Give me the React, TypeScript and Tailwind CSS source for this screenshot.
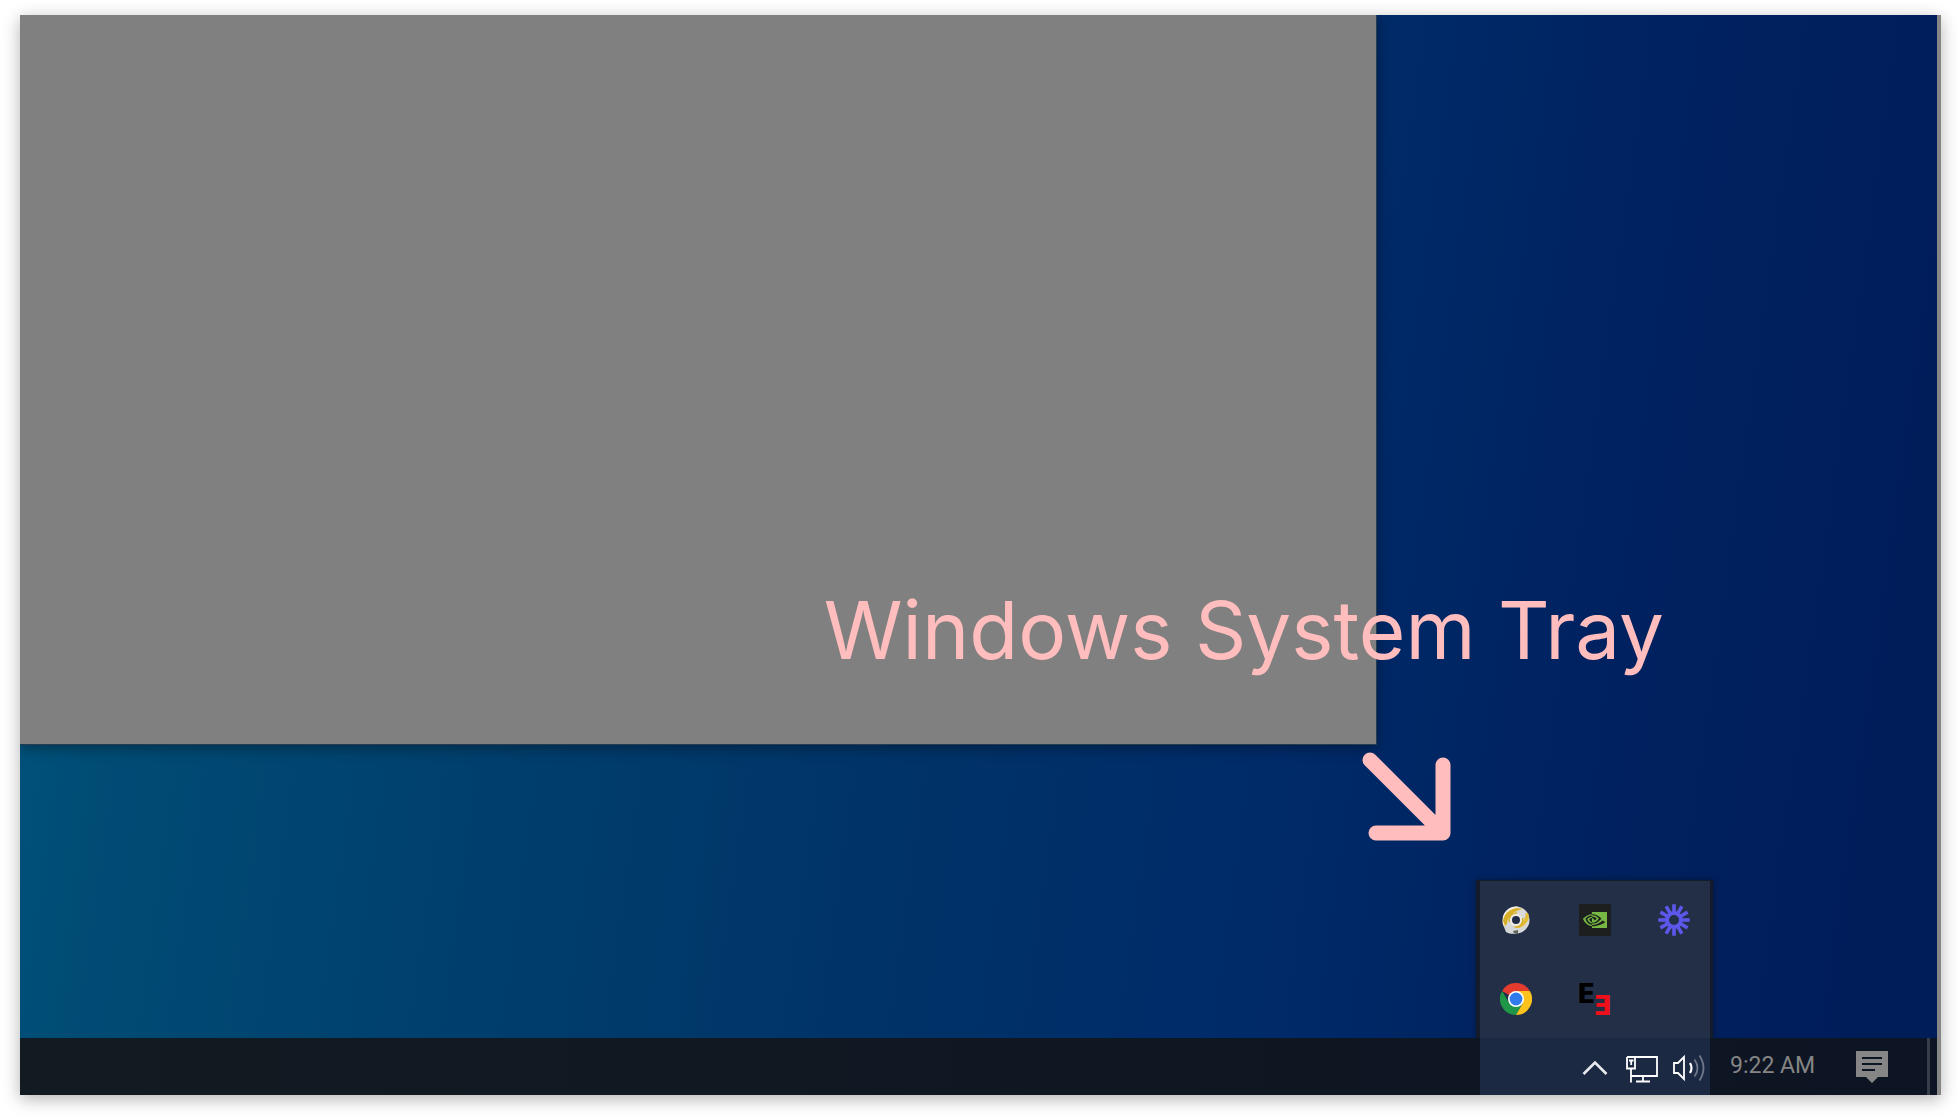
import React from 'react';
import { SiNvidia } from 'react-icons/si';

const DiscIcon = () => (
  <svg viewBox="0 0 32 32" className="w-8 h-8">
    <circle cx="16" cy="16" r="13.5" fill="#d9d9d9" />
    <path d="M3 14A13.5 13.5 0 0 1 18 2.7L14 9A7 7 0 0 0 8 16L4 23A13 13 0 0 1 3 14Z" fill="#f4f1e4" />
    <path d="M3 17C4 10 9 5 17 4L23 5C14 7 8 11 7 20L5 22Z" fill="#d9b128" />
    <path d="M29 13C28 19 23 24 15 25L12 23C20 22 25 17 26 9L28 9Z" fill="#e2bd38" />
    <path d="M4 23C8 21 13 24 20 24L22 27C18 30 10 31 6 28Z" fill="#d6d7d9" />
    <path d="M13 27L18 26L18 30L14 29Z" fill="#5e665a" />
    <circle cx="16" cy="16" r="6.5" fill="#eceae2" />
    <path d="M9.5 18A7 7 0 0 1 17 9M22.5 14A7 7 0 0 1 15 23" fill="none" stroke="#d9b128" strokeWidth="1.4" />
    <circle cx="16" cy="16" r="4" fill="#202c45" />
  </svg>
);

const NvidiaIcon = () => (
  <span className="flex w-8 h-8 items-center justify-center bg-[#1d1f1e]">
    <SiNvidia className="w-6 h-6 text-[#76b843]" />
  </span>
);

const rays = [0, 30, 60, 90, 120, 150, 180, 210, 240, 270, 300, 330];

const BurstIcon = () => (
  <svg viewBox="0 0 32 32" className="w-8 h-8" stroke="#5c57ea" fill="none">
    <circle cx="16" cy="16" r="7" strokeWidth="4" />
    {rays.map((angle) => (
      <path key={angle} d="M16 9V0.3" strokeWidth="3.6" transform={`rotate(${angle} 16 16)`} />
    ))}
  </svg>
);

const ChromeIcon = () => (
  <svg viewBox="0 0 32 32" className="w-8 h-8">
    <path d="M16 16L2.14 8A16 16 0 0 1 29.86 8Z" fill="#e33b2e" />
    <path d="M9.1 20L2.14 8A16 16 0 0 0 16 32L22.9 20Z" fill="#1f9648" />
    <path d="M16 8H29.86A16 16 0 0 1 16 32L22.9 20Z" fill="#fcc31e" />
    <circle cx="16" cy="16" r="8" fill="#fff" />
    <circle cx="16" cy="16" r="6.4" fill="#2f7bec" />
  </svg>
);

const E3Icon = () => (
  <svg viewBox="0 0 32 32" className="w-8 h-8 overflow-visible font-['DejaVu_Sans'] font-bold">
    <text x="-2" y="20" fontSize="27" fill="#000">E</text>
    <text x="14" y="32" fontSize="27" fill="#f0101c">Ǝ</text>
  </svg>
);

const ChevronIcon = () => (
  <svg viewBox="0 0 32 32" className="w-8 h-8" fill="none" stroke="#e8eaee" strokeWidth="2.6">
    <path d="M4.5 23L16 11.5L27.5 23" />
  </svg>
);

const NetworkIcon = () => (
  <svg viewBox="0 0 32 32" className="w-8 h-8" fill="none" stroke="#fff" strokeWidth="1.8">
    <path d="M1 6H31V25H5M17 25V30M10 30.5H24" />
    <path d="M1 6V17.5H9V6M5 17.5V31.5" />
    <path d="M3 9.5H7.5M5.2 10V14" />
  </svg>
);

const VolumeIcon = () => (
  <svg viewBox="0 0 32 32" className="w-8 h-8" fill="none" stroke="#fff" strokeWidth="1.8">
    <path d="M1 12V22H5L11 28V6L5 12Z" />
    <path d="M17 12Q20 17 17 22" strokeWidth="2.2" />
    <path d="M21.5 8.5Q27.5 17 21.5 25.5" stroke="#6f788a" />
    <path d="M26.5 4.5Q34.5 17 26.5 29.5" stroke="#6f788a" />
  </svg>
);

const NotificationIcon = () => (
  <svg viewBox="0 0 32 32" className="w-8 h-8">
    <path d="M0 0H32V26H22L16 32L10 26H0Z" fill="#868686" />
    <path d="M6 7H26M6 13H26M6 19H19" stroke="#0e1522" strokeWidth="1.8" />
  </svg>
);

const trayApps = [
  { name: 'Disc', Icon: DiscIcon },
  { name: 'NVIDIA', Icon: NvidiaIcon },
  { name: 'Loom', Icon: BurstIcon },
  { name: 'Chrome', Icon: ChromeIcon },
  { name: 'E3', Icon: E3Icon },
];

const TrayPopup = () => (
  <div className="absolute bottom-0 right-[224px] w-[237px] bg-[#232f47] shadow-[0_0_6px_rgba(0,0,0,0.4),inset_4px_0_0_#141b2b,inset_-3px_0_0_#141b2b,inset_0_1px_0_#141b2b]">
    <div className="grid grid-cols-3">
      {trayApps.map(({ name, Icon }) => (
        <button key={name} aria-label={name} className="flex h-[79px] items-center justify-center">
          <Icon />
        </button>
      ))}
    </div>
  </div>
);

const Taskbar = () => (
  <div className="flex h-[57px] shrink-0 justify-end bg-linear-to-r from-[#121b21] to-[#0d1423]">
    <div className="flex w-[230px] items-center justify-end gap-[15px] bg-[#1c2943] pr-[5px]">
      <button aria-label="Show hidden icons"><ChevronIcon /></button>
      <button aria-label="Network"><NetworkIcon /></button>
      <button aria-label="Volume"><VolumeIcon /></button>
    </div>
    <button className="w-[146px] pl-5 text-left font-['Roboto',sans-serif] text-[23px] text-[#858585] whitespace-nowrap">
      9:22 AM
    </button>
    <button aria-label="Notifications" className="mr-[39px]"><NotificationIcon /></button>
    <div className="mr-[7px] w-[3px] bg-[#383e49]"></div>
  </div>
);

const Callout = () => (
  <>
    <p className="absolute bottom-[358px] right-[273px] font-['Inter',sans-serif] text-[80px] leading-[100px] whitespace-nowrap text-[#ffbdbd]">
      Windows System Tray
    </p>
    <svg
      viewBox="0 0 90 90"
      className="absolute bottom-[196px] right-[485px] w-[90px] h-[90px]"
      fill="none"
      stroke="#ffbdbd"
      strokeWidth="15"
      strokeLinecap="round"
      strokeLinejoin="round"
    >
      <path d="M8 8L81 81M81 13V81H14" />
    </svg>
  </>
);

const App: React.FC = () => {
  return (
    <div className="h-screen bg-white pt-[15px] pr-[17px] pb-[23px] pl-5">
      <div className="flex h-full flex-col border-r-4 border-[#868686] shadow-[0_4px_16px_rgba(0,0,0,0.3)]">
        <div className="relative flex-1 overflow-hidden bg-[linear-gradient(98deg,#00527b_4%,#004c75_9%,#003d6c_31%,#003268_50%,#002b69_66%,#002260_80%,#001d5a_96%)]">
          <div className="absolute top-0 left-0 right-[561px] bottom-[294px] bg-[#808080] shadow-[0_0_0_1px_#263c50,0_3px_14px_rgba(0,0,0,0.4)]"></div>
          <TrayPopup />
          <Callout />
        </div>
        <Taskbar />
      </div>
    </div>
  );
};

export default App;
